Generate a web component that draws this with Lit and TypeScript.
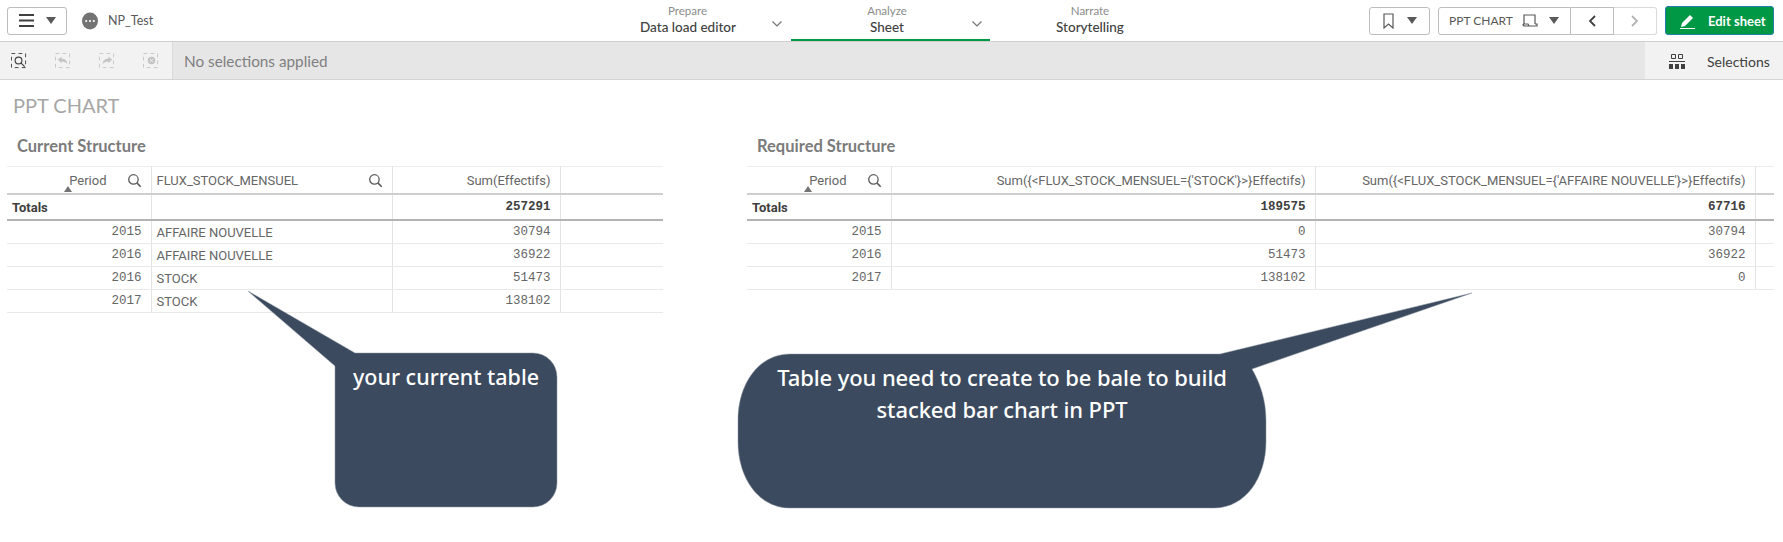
import { LitElement, html, css, svg } from "lit";
import { customElement } from "lit/decorators.js";

const search = html`<svg class="srch" viewBox="0 0 14 14" width="15" height="15"><circle cx="6" cy="6" r="4.4" fill="none" stroke="#595959" stroke-width="1.2"/><path d="M9.2 9.2l3.6 3.6" stroke="#595959" stroke-width="1.5"/></svg>`;
const caret = html`<svg viewBox="0 0 10 7" width="10" height="7"><path d="M0 0h10L5 7z" fill="#595959"/></svg>`;
const chevron = html`<svg viewBox="0 0 10 6" width="10" height="6"><path d="M.5.5L5 5 9.500.5" fill="none" stroke="#737373" stroke-width="1.2"/></svg>`;
const dashed = (stroke: string) => svg`<rect x=".5" y=".5" width="15" height="15" fill="none" stroke="${stroke}" stroke-dasharray="4 3.5"/>`;

interface Col { w: number; }
@customElement("app-root")
export class AppRoot extends LitElement {
  static styles = css`
    :host { display: block; width: 1783px; height: 542px; position: relative; overflow: hidden; background: #fff; font-family: "Lato", "Noto Sans", sans-serif; color: #404040; }
    .top { height: 41px; display: grid; grid-template-columns: 640px 550px 1fr; border-bottom: 1px solid #cfcfcf; box-sizing: content-box; }
    .left, .right { display: flex; align-items: center; }
    .left { padding-left: 7px; }
    .right { justify-content: flex-end; padding-right: 9px; }
    .btn { height: 28px; box-sizing: border-box; border: 1px solid #bdbdbd; border-radius: 3px; display: flex; align-items: center; background: #fff; }
    .menu { width: 60px; padding-left: 11px; gap: 12px; }
    .burger { width: 15px; height: 13px; display: block; }
    .app { display: flex; align-items: center; margin-left: 15px; gap: 10px; font-size: 12.5px; color: #595959; }
    .nav { display: flex; }
    .tab { position: relative; width: 199px; text-align: center; box-sizing: border-box; padding-top: 4px; height: 41px; white-space: nowrap; }
    .tab.first { width: 151px; }
    .tab.first .sm, .tab.first .lg { width: 95px; }
    .tab.active { padding-right: 7px; border-bottom: 2px solid #009845; }
    .tab.last { width: 200px; }
    .tab .sm { font-size: 11.5px; line-height: 14px; color: #8c8c8c; }
    .tab .lg { font-size: 13.5px; line-height: 19px; color: #404040; font-weight: 500; }
    .chev { position: absolute; top: 21px; display: block; line-height: 0; }
    .chev.c1 { left: 132px; }
    .chev.c2 { left: 181px; }
    .group { display: flex; margin-left: 8px; }
    .book { width: 61px; justify-content: flex-end; padding-right: 12px; gap: 13px; }
    .sheetbtn { width: 133px; padding-left: 10px; border-radius: 3px 0 0 3px; font-size: 12px; color: #595959; }
    .sheetbtn span { width: 73px; }
    .sheetbtn svg:last-child { margin-left: 11px; }
    .arrow { width: 43px; justify-content: center; border-left: 0; border-radius: 0; }
    .arrow.end { border-radius: 0 3px 3px 0; border-color: #d9d9d9; }
    .edit { margin-left: 8px; width: 109px; height: 29px; box-sizing: border-box; background: #009845; border: 1px solid #1f7fa8; border-radius: 3px; color: #fff; font-size: 13px; font-weight: 700; display: flex; align-items: center; padding-left: 13px; gap: 12px; }
    .sel { height: 37px; display: flex; background: #e6e6e6; border-bottom: 1px solid #d4d4d4; }
    .tools { width: 173px; background: #f2f2f2; border-right: 1px solid #d9d9d9; display: flex; align-items: center; padding-left: 11px; gap: 28px; box-sizing: border-box; }
    .none { flex: 1; padding: 1px 0 0 11px; line-height: 37px; font-size: 15.3px; color: #808080; }
    .selbtn { width: 138px; background: #f2f2f2; display: flex; align-items: center; padding: 1px 0 0 24px; gap: 22px; box-sizing: border-box; font-size: 14px; color: #404040; }
    .sheet { padding: 13px 9px 0 7px; }
    h1 { margin: 0 0 0 6px; font-size: 20px; line-height: 24px; font-weight: 400; color: #a6a6a6; }
    .charts { display: grid; grid-template-columns: 656px 1027px; column-gap: 84px; margin-top: 20px; }
    h2 { margin: 0 0 10px 10px; font-size: 16.5px; line-height: 19px; font-weight: 700; color: #7b7b7b; }
    table { border-collapse: collapse; table-layout: fixed; width: 100%; font-family: "Roboto", sans-serif; font-size: 13px; color: #666; }
    td, th { padding: 0 9px 0 5px; border-right: 1px solid #e3e3e3; border-bottom: 1px solid #e9e9e9; white-space: nowrap; font-weight: 400; }
    td:last-child, th:last-child { border-right: 0; }
    thead th { height: 26px; border-top: 1px solid #eee; border-bottom: 2px solid #cfcfcf; }
    tbody.tot td { height: 24px; border-bottom: 2px solid #b3b3b3; font-weight: 700; color: #404040; }
    tbody.rows td { height: 22px; }
    .num { text-align: right; font-family: "Liberation Mono", monospace; font-size: 12.5px; }
    .tot .num { font-weight: 700; }
    .r { text-align: right; }
    .l { text-align: left; }
    .hd { position: relative; display: block; }
    .period { text-align: right; padding-right: 44px; }
    .srch { display: block; }
    .ic { position: absolute; top: 0; display: block; }
    .ic.a { left: 115px; }
    .ic.b { left: 211px; }
    .tri { position: absolute; left: 51.5px; top: 13px; width: 0; height: 0; border: 4.5px solid transparent; border-top: 0; border-bottom: 6px solid #737373; }
    .overlay { position: absolute; left: 0; top: 0; pointer-events: none; }
    .note { position: absolute; color: #fff; font-family: "Noto Sans", sans-serif; text-align: center; font-size: 22px; line-height: 32px; font-weight: 500; }
    .n1 { left: 335px; top: 361px; width: 222px; font-size: 21.5px; }
    .n2 { left: 738px; top: 361px; width: 528px; letter-spacing: -0.1px; }
  `;

  private table(cols: Col[], head: unknown[], totals: string[], rows: string[][], leftCol = -1) {
    return html`<table>
      <colgroup>${cols.map((c) => html`<col style="width:${c.w}px" />`)}</colgroup>
      <thead><tr>${head}</tr></thead>
      <tbody class="tot"><tr>${totals.map((t, i) => html`<td class="${i === 0 ? "l" : "num"}">${t}</td>`)}</tr></tbody>
      <tbody class="rows">${rows.map((r) => html`<tr>${r.map((v, i) => html`<td class="${i === leftCol ? "l" : i === r.length - 1 && v === "" ? "" : "num"}">${v}</td>`)}</tr>`)}</tbody>
    </table>`;
  }

  private periodHead() {
    return html`<th class="period"><span class="hd">Period<i class="tri"></i><span class="ic a">${search}</span></span></th>`;
  }

  render() {
    return html`
      <div class="top">
        <div class="left">
          <div class="btn menu">
            <svg class="burger" viewBox="0 0 15 13"><path d="M0 1h15M0 6.500h15M0 12h15" stroke="#404040" stroke-width="1.8"/></svg>
            ${caret}
          </div>
          <div class="app">
            <svg viewBox="0 0 16 18" width="16" height="18"><ellipse cx="8" cy="9" rx="8" ry="8.5" fill="#737373"/><circle cx="4.2" cy="9" r="1.1" fill="#fff"/><circle cx="8" cy="9" r="1.1" fill="#fff"/><circle cx="11.8" cy="9" r="1.1" fill="#fff"/></svg>
            <span>NP_Test</span>
          </div>
        </div>
        <div class="nav">
          <div class="tab first"><div class="sm">Prepare</div><div class="lg">Data load editor</div><span class="chev c1">${chevron}</span></div>
          <div class="tab active"><div class="sm">Analyze</div><div class="lg">Sheet</div><span class="chev c2">${chevron}</span></div>
          <div class="tab last"><div class="sm">Narrate</div><div class="lg">Storytelling</div></div>
        </div>
        <div class="right">
          <div class="btn book">
            <svg viewBox="0 0 11 16" width="11" height="16"><path d="M1 1h9v14L5.500 11 1 15z" fill="none" stroke="#595959" stroke-width="1.2"/></svg>
            ${caret}
          </div>
          <div class="group">
            <div class="btn sheetbtn"><span>PPT CHART</span>
              <svg viewBox="0 0 16 13" width="16" height="13"><path d="M2 10V1h11v9M1 10h5l1 2h8V10h-2M1 10c0 1.500 1 2 2 2h4" fill="none" stroke="#595959" stroke-width="1.2"/></svg>
              ${caret}
            </div>
            <div class="btn arrow"><svg viewBox="0 0 8 12" width="8" height="12"><path d="M7 1L2 6l5 5" fill="none" stroke="#404040" stroke-width="1.8"/></svg></div>
            <div class="btn arrow end"><svg viewBox="0 0 8 12" width="8" height="12"><path d="M1 1l5 5-5 5" fill="none" stroke="#b3b3b3" stroke-width="1.8"/></svg></div>
          </div>
          <div class="edit">
            <svg viewBox="0 0 17 16" width="17" height="16"><path d="M3 10L11 2l3 3-8 8-4 1z" fill="#fff"/><path d="M1 15.500h15" stroke="#fff"/></svg>
            <span>Edit sheet</span>
          </div>
        </div>
      </div>
      <div class="sel">
        <div class="tools">
          <svg viewBox="0 0 17 17" width="16" height="16">${dashed("#404040")}<circle cx="8" cy="8" r="3.6" fill="none" stroke="#404040" stroke-width="1.2"/><path d="M10.500 10.500l4 4" stroke="#404040" stroke-width="1.3"/></svg>
          <svg viewBox="0 0 17 17" width="16" height="16">${dashed("#c9c4c4")}<path d="M3 7l4-3v2c4 0 6 2 6 6-1-2-3-3-6-3v2z" fill="#c4c4c4"/></svg>
          <svg viewBox="0 0 17 17" width="16" height="16">${dashed("#c9c4c4")}<path d="M14 7l-4-3v2c-4 0-6 2-6 6 1-2 3-3 6-3v2z" fill="#c4c4c4"/></svg>
          <svg viewBox="0 0 17 17" width="16" height="16">${dashed("#c9c4c4")}<circle cx="9" cy="8" r="4" fill="#c4c4c4"/><path d="M7.500 6.500l3 3M10.500 6.500l-3 3" stroke="#f2f2f2"/></svg>
        </div>
        <div class="none">No selections applied</div>
        <div class="selbtn">
          <svg viewBox="0 0 16 15" width="16" height="15"><path d="M2.500.500h4v4h-4zM9.500.500h4v4h-4z" fill="none" stroke="#404040"/><path d="M0 7.500h16" stroke="#404040"/><path d="M0 10h4v5H0zM6 10h4v5H6zM12 10h4v5h-4z" fill="#404040"/></svg>
          <span>Selections</span>
        </div>
      </div>
      <div class="sheet">
        <h1>PPT CHART</h1>
        <div class="charts">
          <section>
            <h2>Current Structure</h2>
            ${this.table(
              [{ w: 144 }, { w: 241 }, { w: 168 }, { w: 103 }],
              [
                this.periodHead(),
                html`<th class="l"><span class="hd">FLUX_STOCK_MENSUEL<span class="ic b">${search}</span></span></th>`,
                html`<th class="r">Sum(Effectifs)</th>`,
                html`<th></th>`,
              ],
              ["Totals", "", "257291", ""],
              [
                ["2015", "AFFAIRE NOUVELLE", "30794", ""],
                ["2016", "AFFAIRE NOUVELLE", "36922", ""],
                ["2016", "STOCK", "51473", ""],
                ["2017", "STOCK", "138102", ""],
              ],
              1
            )}
          </section>
          <section>
            <h2>Required Structure</h2>
            ${this.table(
              [{ w: 144 }, { w: 424 }, { w: 440 }, { w: 19 }],
              [
                this.periodHead(),
                html`<th class="r">Sum({&lt;FLUX_STOCK_MENSUEL={'STOCK'}&gt;}Effectifs)</th>`,
                html`<th class="r">Sum({&lt;FLUX_STOCK_MENSUEL={'AFFAIRE NOUVELLE'}&gt;}Effectifs)</th>`,
                html`<th></th>`,
              ],
              ["Totals", "189575", "67716", ""],
              [
                ["2015", "0", "30794", ""],
                ["2016", "51473", "36922", ""],
                ["2017", "138102", "0", ""],
              ]
            )}
          </section>
        </div>
      </div>
      <svg class="overlay" width="1783" height="542" viewBox="0 0 1783 542">
        <path d="M248 291L355 353H533a24 24 0 0 1 24 24V483a24 24 0 0 1-24 24H359a24 24 0 0 1-24-24V366Z" fill="#3b4a5e" stroke="#8e97a3" stroke-width=".5"/>
        <path d="M1472 293L1220 354H790C758 354 738 385 738 420V442C738 477 758 508 790 508H1214C1246 508 1266 477 1266 442V420C1266 400 1260 383 1252 369Z" fill="#3b4a5e" stroke="#8e97a3" stroke-width=".5"/>
      </svg>
      <div class="note n1">your current table</div>
      <div class="note n2">Table you need to create to be bale to build<br />stacked bar chart in PPT</div>
    `;
  }
}
